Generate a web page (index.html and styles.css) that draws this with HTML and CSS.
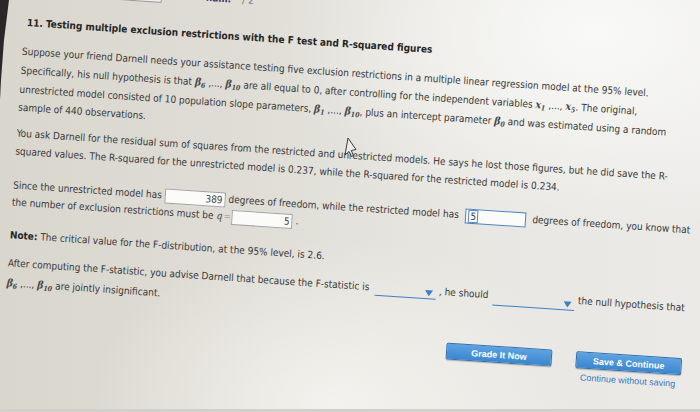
FILE: index.html
```html
<!DOCTYPE html>
<html lang="en">
<head>
<meta charset="utf-8">
<title>Testing multiple exclusion restrictions</title>
<link rel="stylesheet" href="styles.css">
</head>
<body>
<div class="screen">
  <div class="sheet">
    <div class="topbar">
      <span class="topbox"></span>
      <span class="toptext">nam. <span class="frac">/ 2</span></span>
    </div>
    <h1 class="title">11. Testing multiple exclusion restrictions with the F test and R-squared figures</h1>
    <p class="para p1">Suppose your friend Darnell needs your assistance testing five exclusion restrictions in a multiple linear regression model at the 95% level.<br>Specifically, his null hypothesis is that <i class="m">β<sub>6</sub></i> ,..., <i class="m">β<sub>10</sub></i> are all equal to 0, after controlling for the independent variables <i class="m">x<sub>1</sub></i> ,..., <i class="m">x<sub>5</sub></i>. The original,<br>unrestricted model consisted of 10 population slope parameters, <i class="m">β<sub>1</sub></i> ,..., <i class="m">β<sub>10</sub></i>, plus an intercept parameter <i class="m">β<sub>0</sub></i> and was estimated using a random<br>sample of 440 observations.</p>
    <p class="para p2">You ask Darnell for the residual sum of squares from the restricted and unrestricted models. He says he lost those figures, but he did save the R-<br>squared values. The R-squared for the unrestricted model is 0.237, while the R-squared for the restricted model is 0.234.</p>
    <p class="para p3">Since the unrestricted model has <span class="box right">389</span> degrees of freedom, while the restricted model has <span class="box focus"><span class="sel">5</span></span> <span class="gapword">degrees of freedom, you know that</span><br>the number of exclusion restrictions must be <i class="m q">q</i><span class="eq">=</span><span class="box right">5</span> .</p>
    <p class="para p4"><b>Note:</b> The critical value for the F-distribution, at the 95% level, is 2.6.</p>
    <p class="para p5">After computing the F-statistic, you advise Darnell that because the F-statistic is <span class="dd dd1"><span class="tri"></span></span> , he should <span class="dd dd2"><span class="tri"></span></span> the null hypothesis that<br><i class="m">β<sub>6</sub></i> ,..., <i class="m">β<sub>10</sub></i> are jointly insignificant.</p>
    <div class="actions">
      <button class="btn">Grade It Now</button>
      <div class="savecol">
        <button class="btn">Save &amp; Continue</button>
        <span class="link">Continue without saving</span>
      </div>
    </div>
  </div>
  <div class="bezel"></div>
  <div class="bottomedge"></div>
  <svg class="cursor" width="18" height="22" viewBox="0 0 18 22"><path d="M6 2 L3 19 L7 15.5 L9.5 20.5 L11.5 19.5 L9.3 14.5 L14 13.5 Z" fill="rgba(240,240,236,0.7)" stroke="#3a3a3a" stroke-width="1" stroke-linejoin="round"/></svg>
</div>
</body>
</html>
```
FILE: styles.css
```css
html, body {
  margin: 0;
  padding: 0;
}
body {
  width: 700px;
  height: 412px;
  overflow: hidden;
  font-family: "DejaVu Sans Condensed", "DejaVu Sans", sans-serif;
  font-stretch: condensed;
}
.screen {
  position: relative;
  width: 700px;
  height: 412px;
  overflow: hidden;
  display: flow-root;
  background:
    radial-gradient(ellipse 45% 50% at 85% 8%, rgba(250,250,248,0.95), rgba(250,250,248,0) 100%),
    radial-gradient(ellipse 35% 40% at 48% 98%, rgba(246,245,241,0.85), rgba(246,245,241,0)),
    linear-gradient(90deg, #d9d6cd 0%, #dfddd6 35%, #e7e6e1 65%, #ebeae7 100%);
  color: #383838;
}
.sheet {
  width: 760px;
  margin: -28px 0 0 24px;
  transform-origin: 3px 50px;
  transform: rotate(3.8deg);
  font-size: 10px;
}
.topbar {
  height: 22px;
  display: flex;
  align-items: flex-end;
  gap: 44px;
}
.topbox {
  display: block;
  width: 176px;
  height: 18px;
  margin-left: -40px;
  border: 1px solid #9d9d9d;
  background: #f1f1ef;
  box-sizing: border-box;
}
.toptext {
  font-size: 10px;
  line-height: 10px;
  margin-bottom: 3px;
  color: #333a66;
  font-weight: bold;
}
.toptext .frac {
  color: #777;
  font-weight: normal;
  margin-left: 8px;
}
.title {
  margin: 21px 0 0 3px;
  font-size: 10px;
  line-height: 16px;
  font-weight: bold;
  color: #262626;
  white-space: nowrap;
}
.para {
  margin: 0;
  white-space: nowrap;
  line-height: 18px;
}
.p1 { margin-top: 12px; }
.p2 { margin-top: 8px; }
.p3 { margin-top: 16px; line-height: 17px; }
.p4 { margin-top: 16px; }
.p5 { margin-top: 9px; line-height: 19px; }
.p4 b { color: #262626; }
.m {
  font-family: "DejaVu Serif", serif;
  font-style: italic;
  font-weight: bold;
  font-size: 10.5px;
  color: #4a4a4a;
}
.m sub {
  font-size: 7px;
  vertical-align: -2px;
  line-height: 0;
}
.q { font-weight: normal; }
.eq {
  color: #9aa;
  margin: 0 1px;
}
.box {
  display: inline-block;
  width: 61px;
  height: 15px;
  box-sizing: border-box;
  border: 1px solid #a2a2a2;
  background: #fbfbfa;
  vertical-align: middle;
  line-height: 13px;
  font-size: 10px;
  color: #444;
}
.box.right {
  text-align: right;
  padding-right: 2px;
}
.box.focus {
  border-color: #4d82c4;
  padding-left: 2px;
  margin-left: 4px;
}
.sel {
  display: inline-block;
  border: 1px solid #5a86c0;
  line-height: 11px;
  padding: 0 1px;
}
.gapword { margin-left: 3px; }
.dd {
  display: inline-block;
  position: relative;
  height: 10px;
  border-bottom: 1.5px solid #3f7fc2;
  vertical-align: -5px;
}
.dd1 { width: 61px; margin-left: 3px; }
.dd2 { width: 82px; margin-left: 2px; vertical-align: -7px; }
.tri {
  position: absolute;
  right: 3px;
  top: 2px;
  width: 0;
  height: 0;
  border-left: 4.5px solid transparent;
  border-right: 4.5px solid transparent;
  border-top: 6px solid #3f7fc2;
}
.actions {
  display: flex;
  align-items: flex-start;
  gap: 24px;
  margin-top: 21px;
  padding-left: 443px;
}
.savecol {
  display: flex;
  flex-direction: column;
  align-items: center;
  gap: 2px;
}
.btn {
  width: 106px;
  height: 17px;
  padding: 0;
  border: 1px solid #2f6fb0;
  border-radius: 2px;
  background: linear-gradient(#5ea3e2, #3b86cf);
  color: #fff;
  font-family: "Liberation Sans", Arial, sans-serif;
  font-size: 9px;
  font-weight: bold;
  box-shadow: 0 1px 1px rgba(0,0,0,0.25);
}
.link {
  font-family: "Liberation Sans", Arial, sans-serif;
  font-size: 9px;
  color: #3a78be;
  line-height: 14px;
}
.bezel {
  position: absolute;
  left: 0;
  top: 0;
  width: 10px;
  height: 100px;
  background: #2b2729;
  clip-path: polygon(0 0, 9px 0, 4px 40px, 1px 80px, 0 100px);
}
.bottomedge {
  position: absolute;
  left: 0;
  bottom: 0;
  width: 700px;
  height: 3px;
  background: #d2d0cb;
}
.cursor {
  position: absolute;
  left: 342px;
  top: 136px;
}
```
